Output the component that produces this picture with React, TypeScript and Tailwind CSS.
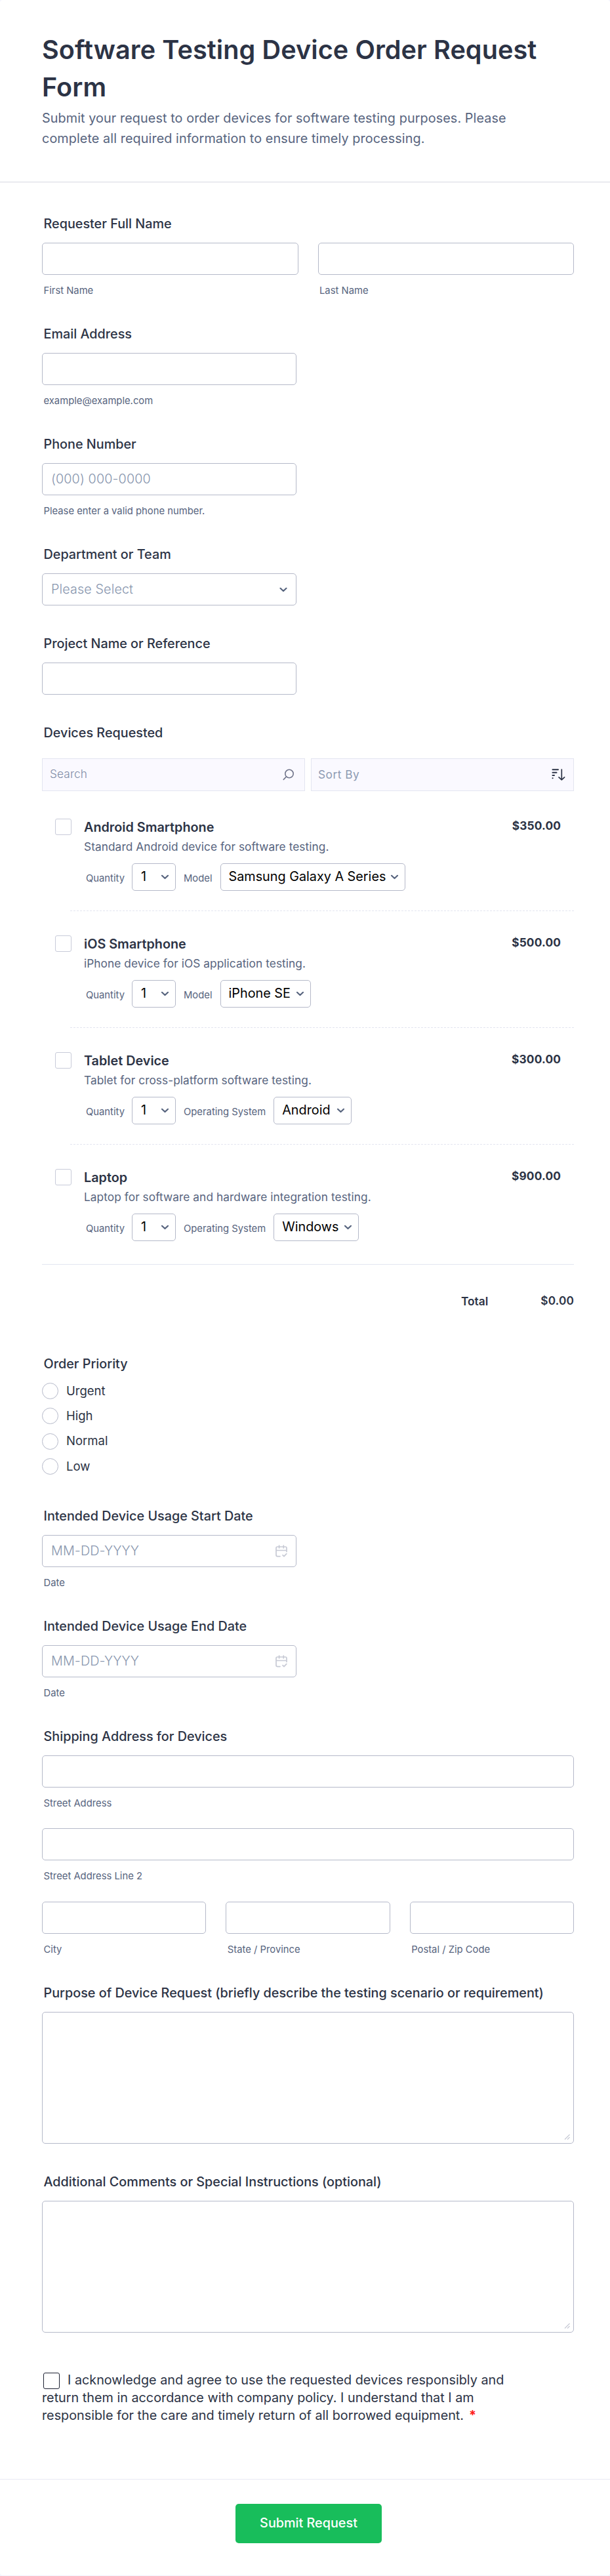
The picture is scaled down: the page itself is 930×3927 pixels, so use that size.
import { ReactNode } from "react";

const DEVICES = [
  { name: "Android Smartphone", desc: "Standard Android device for software testing.", price: "$350.00", option: "Model", value: "Samsung Galaxy A Series", width: "w-[282px]" },
  { name: "iOS Smartphone", desc: "iPhone device for iOS application testing.", price: "$500.00", option: "Model", value: "iPhone SE", width: "w-[138px]" },
  { name: "Tablet Device", desc: "Tablet for cross-platform software testing.", price: "$300.00", option: "Operating System", value: "Android", width: "w-[119px]" },
  { name: "Laptop", desc: "Laptop for software and hardware integration testing.", price: "$900.00", option: "Operating System", value: "Windows", width: "w-[130px]" },
];

const PRIORITIES = ["Urgent", "High", "Normal", "Low"];

const TEXTAREAS = [
  "Purpose of Device Request (briefly describe the testing scenario or requirement)",
  "Additional Comments or Special Instructions (optional)",
];

function Chevron({ size = 13 }: { size?: number }) {
  return (
    <svg width={size} height="8" viewBox="0 0 13 8" fill="none" aria-hidden="true">
      <path d="M2 1.8 6.5 6 11 1.8" stroke="#57647e" strokeWidth="2.2" strokeLinecap="round" strokeLinejoin="round" />
    </svg>
  );
}

function CalendarIcon() {
  return (
    <svg className="mr-px" width="18" height="19" viewBox="0 0 18 19" fill="none" stroke="#c7cad5" strokeWidth="1.7" strokeLinecap="round" strokeLinejoin="round" aria-hidden="true">
      <path d="M7 17.600H3a2 2 0 0 1-2-2V5a2 2 0 0 1 2-2h12a2 2 0 0 1 2 2v5.500M1 8.500h16M5.600 1v3.800M12.300 1v3.800" />
      <path d="m11 15.600 2 2 3.800-4" />
    </svg>
  );
}

function Field({ label, labelGap = "mb-[17px]", children }: { label: string; labelGap?: string; children: ReactNode }) {
  return (
    <div className="mb-[45px]">
      <div className={`pt-px pl-[2.500px] text-[19.8px] leading-6 font-medium ${labelGap}`}>{label}</div>
      {children}
    </div>
  );
}

function Input({ placeholder, icon, className = "" }: { placeholder?: string; icon?: ReactNode; className?: string }) {
  return (
    <div className={`flex h-[49px] items-center justify-between rounded-[5px] border border-[#b5b9c9] bg-white pr-3 pl-[13px] ${className}`}>
      <span className="text-[19.8px] font-light tracking-[0.1px] text-[#8896ae]">{placeholder}</span>
      {icon}
    </div>
  );
}

function SubLabel({ children }: { children: ReactNode }) {
  return <div className="mt-[15px] pt-px pl-[2.500px] text-[14.8px] leading-4 text-[#57647e]">{children}</div>;
}

export default function App() {
  return (
    <div className="h-[3927px] bg-[#f3f3fe]">
      <main className="h-[3926px] w-[930px] rounded-[4px] bg-white font-['Inter',sans-serif] text-[#2c3345]">
        <header className="h-[278px] border-b border-[#d7d8e1] px-16 pt-12">
          <h1 className="text-[39.6px] leading-[57px] font-semibold tracking-[0.09px]">
            Software Testing Device Order Request<br />Form
          </h1>
          <p className="mt-[3px] text-[19.8px] leading-[31px] tracking-[0.09px] text-[#57647e]">
            Submit your request to order devices for software testing purposes. Please<br />
            complete all required information to ensure timely processing.
          </p>
        </header>

        <form className="pt-[50px] pr-[55px] pl-[64px]">
          <Field label="Requester Full Name">
            <div className="grid grid-cols-2 gap-[30px]">
              <div><Input /><SubLabel>First Name</SubLabel></div>
              <div><Input /><SubLabel>Last Name</SubLabel></div>
            </div>
          </Field>
          <Field label="Email Address">
            <Input className="w-[388px]" />
            <SubLabel>example@example.com</SubLabel>
          </Field>
          <Field label="Phone Number">
            <Input className="w-[388px]" placeholder="(000) 000-0000" />
            <SubLabel>Please enter a valid phone number.</SubLabel>
          </Field>
          <Field label="Department or Team">
            <Input className="w-[388px]" placeholder="Please Select" icon={<Chevron size={14} />} />
          </Field>
          <Field label="Project Name or Reference">
            <Input className="w-[388px]" />
          </Field>

          <Field label="Devices Requested" labelGap="mb-[27px]">
            {/* Search and sort */}
            <div className="grid h-[50px] grid-cols-2 gap-[9px]">
              <div className="flex items-center justify-between border border-[#e3e5f0] bg-[#faf9ff] pr-[15px] pl-[11px] text-[17.3px] font-light tracking-[0.1px] text-[#7f8ca5]">
                <span className="-mt-0.5">Search</span>
                <svg width="18" height="18" viewBox="0 0 18 18" fill="none" stroke="#70748a" strokeWidth="1.6" strokeLinecap="round" aria-hidden="true">
                  <circle cx="10" cy="7.500" r="6.200" />
                  <path d="m5.300 12.200-4 4.200" />
                </svg>
              </div>
              <div className="flex items-center justify-between border border-[#e3e5f0] bg-[#faf9ff] pr-3 pl-[10px] text-[17.3px] tracking-[0.5px] text-[#8d9ab2]">
                <span>Sort By</span>
                <svg width="21" height="18" viewBox="0 0 21 18" fill="none" stroke="#2c3345" strokeWidth="2" strokeLinecap="round" strokeLinejoin="round" aria-hidden="true">
                  <path d="M1.500 1.200h8.500M1.500 5.700h6M1.500 10h2.500M1.500 14.300h.2" />
                  <path d="M15.300 1v15.800M11 12.800l4.300 4 4.300-4" strokeWidth="1.700" />
                </svg>
              </div>
            </div>

            {/* Products */}
            <ul className="pt-6">
              {DEVICES.map((d, i) => (
                <li key={d.name}>
                  <div className="flex h-[158px] pt-[18px] pr-5 pl-5">
                    <span className="mr-[19px] h-[25px] w-[25px] shrink-0 rounded-[3px] border border-[#c8cbd9]" />
                    <div className="flex-1">
                      <div className="mt-px text-[19.8px] leading-6 font-semibold">{d.name}</div>
                      <div className="mt-[6px] text-[17.3px] leading-6 tracking-[0.06px] text-[#57647e]">{d.desc}</div>
                      <div className="mt-[13px] flex items-center pl-[3px] text-[14.8px] text-[#57647e]">
                        <span className="w-[70px] pt-1">Quantity</span>
                        <span className="flex h-[42px] w-[67px] items-center justify-between rounded-[5px] border border-[#b5b9c9] pr-[9px] pl-[13px] text-[19.8px] text-black">1<Chevron /></span>
                        <span className="mr-3 ml-3 pt-1">{d.option}</span>
                        <span className={`flex h-[42px] items-center justify-between rounded-[5px] border border-[#b5b9c9] pr-[9px] pl-[12px] text-[19.8px] whitespace-nowrap text-black ${d.width}`}>{d.value}<Chevron /></span>
                      </div>
                    </div>
                    <div className="-mt-px text-[17.3px] leading-6 font-bold tracking-[0.15px]">{d.price}</div>
                  </div>
                  {i < DEVICES.length - 1 && <div className="mb-[19px] ml-[43px] border-t border-dashed border-[#e3e5f0]" />}
                </li>
              ))}
            </ul>
            <div className="mt-[5px] flex h-[94px] justify-end border-t border-[#e3e5f0] pt-[43px] text-[17.3px] leading-6 font-semibold">
              <span className="mr-[80px] pt-px">Total</span>
              <span className="tracking-[0.15px]">$0.00</span>
            </div>
          </Field>

          <Field label="Order Priority">
            <div className="space-y-[13.400px] pb-[5px]">
              {PRIORITIES.map((p) => (
                <div key={p} className="flex h-[25px] items-center text-[18.500px]">
                  <span className="mr-3 h-[25px] w-[25px] rounded-full border border-[#b5b9c9]" />
                  {p}
                </div>
              ))}
            </div>
          </Field>
          <Field label="Intended Device Usage Start Date">
            <Input className="w-[388px]" placeholder="MM-DD-YYYY" icon={<CalendarIcon />} />
            <SubLabel>Date</SubLabel>
          </Field>
          <Field label="Intended Device Usage End Date">
            <Input className="w-[388px]" placeholder="MM-DD-YYYY" icon={<CalendarIcon />} />
            <SubLabel>Date</SubLabel>
          </Field>

          <Field label="Shipping Address for Devices">
            <Input />
            <SubLabel>Street Address</SubLabel>
            <Input className="mt-[30px]" />
            <SubLabel>Street Address Line 2</SubLabel>
            <div className="mt-[31px] grid grid-cols-3 gap-[30px]">
              {["City", "State / Province", "Postal / Zip Code"].map((t) => (
                <div key={t}><Input /><SubLabel>{t}</SubLabel></div>
              ))}
            </div>
          </Field>

          {TEXTAREAS.map((t) => (
            <Field key={t} label={t}>
              <div className="flex h-[201px] items-end justify-end rounded-[5px] border border-[#b5b9c9] p-[5px]">
                <svg width="9" height="9" viewBox="0 0 9 9" stroke="#c7cad5" strokeWidth="1.2" aria-hidden="true">
                  <path d="M1 8.500 8.500 1M5 8.500 8.500 5" />
                </svg>
              </div>
            </Field>
          ))}

          {/* Terms */}
          <div className="pt-[14px] text-[19.8px] leading-[27px]">
            <span className="mr-3 ml-[2px] inline-block h-[25px] w-[25px] rounded-[3px] border border-[#1e2233] align-middle" />
            I acknowledge and agree to use the requested devices responsibly and<br />
            return them in accordance with company policy. I understand that I am<br />
            responsible for the care and timely return of all borrowed equipment.
            <span className="ml-2 font-bold text-[#ff1a1a]">*</span>
          </div>
        </form>

        <footer className="mt-[83px] flex justify-center border-t border-[#e8e9f3] pt-[37px] pl-[11px]">
          <button className="h-[60px] w-[223px] rounded-[5px] bg-[#18bd5b] text-[19.8px] font-medium text-white">Submit Request</button>
        </footer>
      </main>
    </div>
  );
}
